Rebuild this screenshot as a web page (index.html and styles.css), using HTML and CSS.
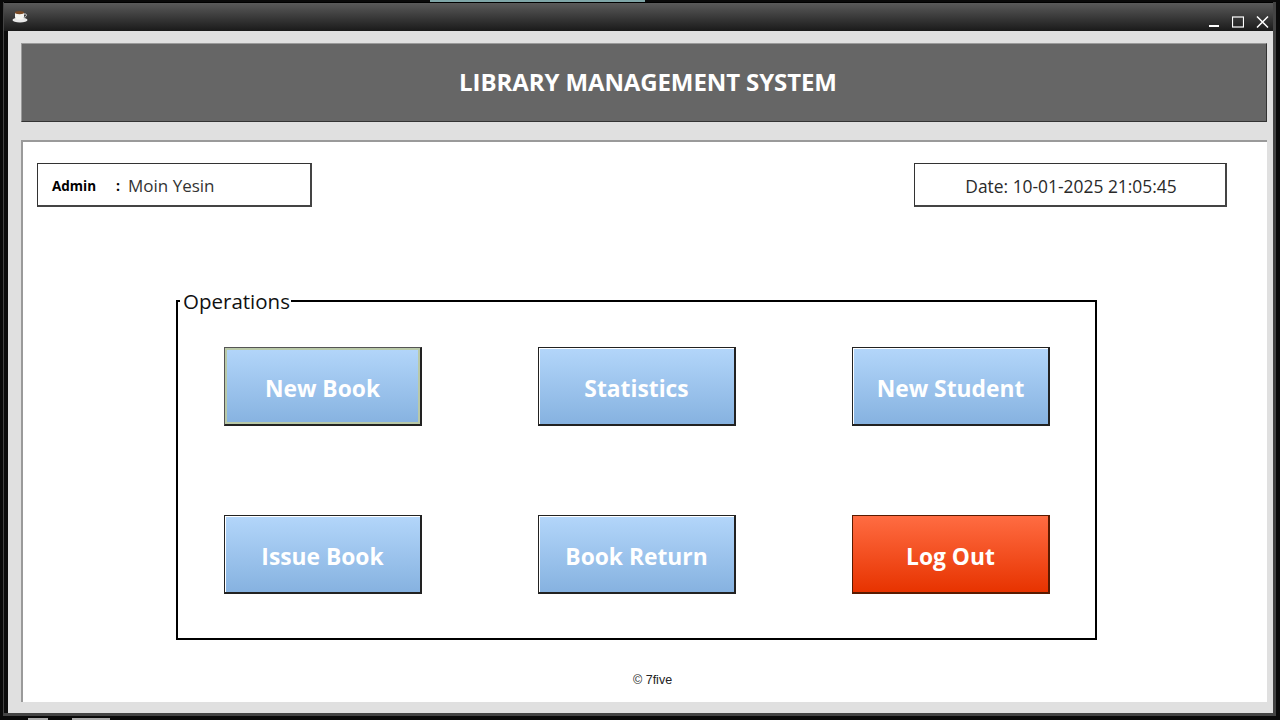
FILE: index.html
```html
<!DOCTYPE html>
<html lang="en">
<head>
<meta charset="utf-8">
<title>Library Management System</title>
<link rel="stylesheet" href="styles.css">
</head>
<body>
<div class="strip"></div>
<div class="window">
  <div class="titlebar">
    <svg class="cup" width="16" height="13" viewBox="0 0 16 13">
      <ellipse cx="8" cy="10" rx="7.5" ry="2.6" fill="#e8e8e8"/>
      <path d="M3 2.5h9v4.5c0 1.6-1.6 2.8-4.5 2.8S3 8.6 3 7z" fill="#f4f4f0"/>
      <path d="M12 4h1.6c1.3 0 1.3 3-1.9 3.4" fill="none" stroke="#ddd" stroke-width="1"/>
      <ellipse cx="7.5" cy="2.6" rx="4.6" ry="1.6" fill="#7a4a25"/>
    </svg>
    <div class="controls">
      <svg width="11" height="12" viewBox="0 0 11 12"><path d="M0 10h10" stroke="#fff" stroke-width="2"/></svg>
      <svg width="12" height="12" viewBox="0 0 12 12"><rect x=".5" y="1" width="11" height="10" fill="none" stroke="#fff" stroke-width="1.2"/></svg>
      <svg width="13" height="12" viewBox="0 0 13 12"><path d="M1 .5l11 11M12 .5l-11 11" stroke="#fff" stroke-width="1.5"/></svg>
    </div>
  </div>
  <div class="content">
    <header class="banner"><h1>LIBRARY MANAGEMENT SYSTEM</h1></header>
    <main class="panel">
      <div class="info">
        <div class="box box-admin"><b class="admin">Admin</b><b class="colon">:</b><span>Moin Yesin</span></div>
        <div class="box box-date">Date: 10-01-2025 21:05:45</div>
      </div>
      <fieldset class="group">
        <legend>Operations</legend>
        <div class="grid">
          <button class="btn btn-focus">New Book</button>
          <button class="btn">Statistics</button>
          <button class="btn">New Student</button>
          <button class="btn">Issue Book</button>
          <button class="btn">Book Return</button>
          <button class="btn btn-red">Log Out</button>
        </div>
      </fieldset>
      <p class="copy">© 7five</p>
    </main>
  </div>
</div>
<div class="under"><i class="frag frag-a"></i><i class="frag frag-b"></i></div>
</body>
</html>
```
FILE: styles.css
```css
* { box-sizing: border-box; }
html, body { margin: 0; height: 720px; overflow: hidden; background: #0a0a0a; }
body { font-family: "Open Sans", "Noto Sans", sans-serif; }
.strip { width: 215px; height: 2px; margin-left: 430px; background: #7fa6a8; }
.window { width: 1273px; height: 714px; margin-left: 3px; background: #0c0c0c; border: solid #444; border-width: 0 3px 3px 1px; display: flex; flex-direction: column; padding: 0 0 0 4px; }
.titlebar { height: 29px; flex: none; margin-left: -4px; padding: 7px 4px 0 8px; display: flex; justify-content: space-between; align-items: flex-start; background: linear-gradient(#5a5a5a, #1a1a1a); border-top: 1px solid #000; }
.cup { display: block; }
.controls { display: flex; gap: 12px; margin-top: 6px; }
.controls svg { display: block; }
.content { flex: 1; background: #e0e0e0; padding: 12px 6px 11px 13px; display: flex; flex-direction: column; }
.banner { height: 79px; flex: none; background: #666; border: 1px solid; border-color: #9a9a9a #333 #333 #9a9a9a; display: flex; align-items: center; justify-content: center; }
.banner h1 { margin: 0 0 2px 8px; color: #fff; font-size: 24px; font-weight: 700; line-height: 32px; letter-spacing: -.1px; }
.panel { flex: 1; margin-top: 18px; background: #fff; border: solid #9a9a9a; border-width: 2px 0 0 2px; padding: 21px 40px 0 14px; }
.info { display: flex; justify-content: space-between; }
.box { height: 44px; background: #fff; border: 1px solid #333; border-right: 2px solid #444; border-bottom: 2px solid #444; padding-top: 2px; display: flex; align-items: center; color: #2a2a2a; font-size: 17.4px; }
.box-admin { width: 275px; padding-left: 14px; color: #333; font-size: 17px; }
.admin { width: 64px; font-size: 13.5px; font-weight: 700; color: #000; }
.colon { width: 12px; font-size: 14px; color: #000; }
.box-date { width: 313px; justify-content: center; padding-left: 2px; }
.group { width: 921px; height: 351px; margin: 82px 0 0 139px; padding: 0; border: 2px solid #000; }
.group legend { margin-left: 2px; padding: 0 1px 0 3px; font-size: 20.5px; height: 24px; line-height: 24px; color: #111; }
.grid { display: grid; grid-template-columns: repeat(3, 198px); grid-template-rows: repeat(2, 79px); gap: 89px 116px; padding: 34px 0 0 46px; }
.btn { font: 700 22.8px "Open Sans", "Noto Sans", sans-serif; color: #fff; background: linear-gradient(#b3d6fa, #86b2e0); border: 1px solid #222; border-right: 2px solid #222; border-bottom: 2px solid #222; padding: 4px 0 0; box-shadow: inset 1px 1px 0 #fff; }
.btn-focus { border-color: #555 #222 #222 #555; box-shadow: inset 0 0 0 2px #b9c9a8; }
.btn-red { background: linear-gradient(#ff6c42, #e73300); border-color: #5a1a00; box-shadow: none; }
.copy { margin: 33px 0 0 596px; font: 12.5px "Liberation Sans", Arial, sans-serif; color: #222; }
.under { display: flex; height: 4px; align-items: flex-end; padding-left: 28px; gap: 24px; }
.frag { display: block; height: 2px; background: #aaa; }
.frag-a { width: 20px; }
.frag-b { width: 38px; }
```
